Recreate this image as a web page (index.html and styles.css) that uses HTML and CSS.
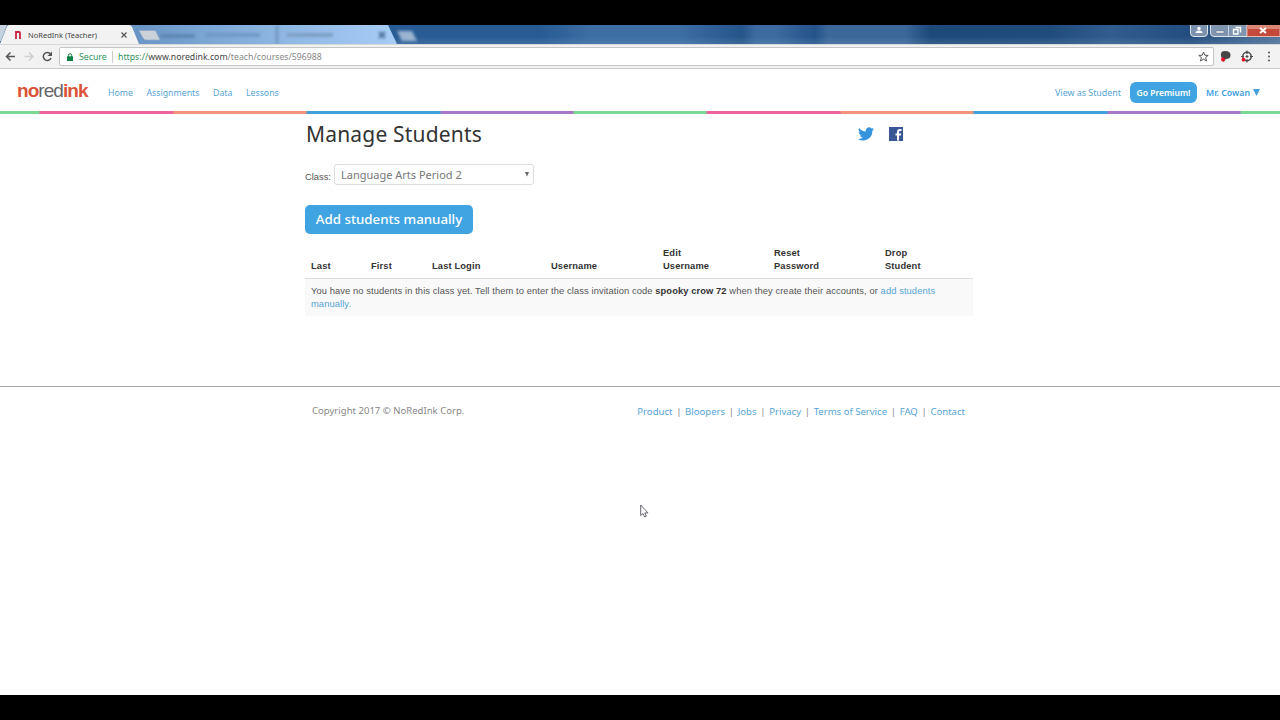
FILE: index.html
```html
<!DOCTYPE html>
<html lang="en">
<head>
    <meta charset="UTF-8">
    <meta name="viewport" content="width=device-width, initial-scale=1.0">
    <title>NoRedInk (Teacher)</title>
    <link rel="stylesheet" href="styles.css">
</head>
<body>
    <div class="window">
        <div class="tab-bar">
            <svg class="tab-shapes" width="430" height="19" viewBox="0 0 430 19">
                <defs>
                    <filter id="soft" x="-10%" y="-30%" width="120%" height="160%"><feGaussianBlur stdDeviation="1.5"/></filter>
                    <linearGradient id="glass" x1="0" x2="1">
                        <stop offset="0" stop-color="#6893c4"/>
                        <stop offset="0.45" stop-color="#87b0dd"/>
                        <stop offset="1" stop-color="#a7cdf6"/>
                    </linearGradient>
                </defs>
                <path d="M130 0H388L397 19H130Z" fill="url(#glass)"/>
                <g filter="url(#soft)">
                    <path d="M160 11h35" stroke="#587fab" stroke-width="3"/>
                    <path d="M205 10h55" stroke="#7199c7" stroke-width="4"/>
                    <path d="M277 0v19" stroke="#6f96c1" stroke-width="3"/>
                    <path d="M287 10h46" stroke="#7e9fc5" stroke-width="4"/>
                    <path d="M379 7l6 6M385 7l-6 6" stroke="#3e678f" stroke-width="2"/>
                    <path d="M397 6h15l5 10h-15z" fill="#9bb5d2"/>
                </g>
                <path d="M139 5.500h15q1 0 2 1l4 8.500h-14q-2 0-3-2z" fill="#cbd1d8" stroke="#8da8c6" stroke-width="0.700"/>
                <path d="M0 19L7 1Q8 0 9 0H129Q131 0 132 2L139 19Z" fill="#f2f2f2"/>
                <path d="M0 0H7L1 16H0Z" fill="#c5d2df"/>
            </svg>
            <div class="active-tab">
                <svg class="favicon" width="6" height="8" viewBox="0 0 6 8"><path d="M1 8V1H4Q5 1 5 2V8" fill="none" stroke="#c9243f" stroke-width="1.800"/></svg>
                <span class="tab-title">NoRedInk (Teacher)</span>
                <svg class="tab-close" width="6" height="6" viewBox="0 0 6 6"><path d="M.5 .5l5 5M5.500 .5l-5 5" stroke="#555" stroke-width="1.200"/></svg>
            </div>
            <svg class="window-controls" width="90" height="14" viewBox="0 0 90 14">
                <path d="M.5 0V8Q.5 11.500 4 11.500H14Q17.500 11.500 17.500 8V0" fill="#7b91ac" stroke="#dce4ee"/>
                <path d="M20.500 0V8Q20.500 11.500 24 11.500H57V0" fill="#8095af" stroke="#dce4ee"/>
                <path d="M38.500 0v11" stroke="#c4d0de"/>
                <path d="M57 0H90V11.500H57Z" fill="#c4493a" stroke="#e6b9b2"/>
                <path d="M58 0H90V4H58Z" fill="#d98675"/>
                <circle cx="9" cy="3.500" r="1.700" fill="#fff"/><path d="M5.500 8q0-2.500 3.500-2.500T12.500 8z" fill="#fff"/>
                <path d="M26 6h8v2h-8z" fill="#fff" stroke="#526580" stroke-width="0.500"/>
                <path d="M45.500 2.500h5v5M43.500 4.500h4.500v4.500h-4.500z" fill="none" stroke="#fff" stroke-width="1.400"/>
                <path d="M70 3l6 5M76 3l-6 5" stroke="#fff" stroke-width="2"/>
            </svg>
        </div>

        <div class="toolbar">
            <svg class="browser-nav" width="60" height="22" viewBox="0 0 60 22" fill="none" stroke-width="1.500">
                <path d="M15 11.500H6.500M10.500 7.500l-4 4 4 4" stroke="#555"/>
                <path d="M24.500 11.500H33M29 7.500l4 4-4 4" stroke="#cfcfcf"/>
                <path d="M50.500 9A4 4 0 1 0 51 13" stroke="#555"/>
                <path d="M52 6.500v4.500h-4.500z" fill="#555"/>
            </svg>
            <div class="address">
                <svg class="lock" width="6" height="8" viewBox="0 0 6 8"><path d="M1.300 4V2.400a1.700 1.700 0 0 1 3.400 0V4" fill="none" stroke="#0b8043"/><path d="M0 3.300h6V8H0z" fill="#0b8043"/></svg>
                <span class="secure">Secure</span>
                <span class="url"><span class="scheme">https://</span><span class="host">www.noredink.com</span>/teach/courses/596988</span>
                <svg class="star" width="11" height="11" viewBox="0 0 11 11"><path d="M5.500 1l1.300 3.200 3.400.2-2.600 2.200.9 3.400-3-1.900-3 1.900.9-3.400L.8 4.400l3.400-.2z" fill="none" stroke="#555"/></svg>
            </div>
            <svg class="extensions" width="66" height="22" viewBox="0 0 66 22">
                <path d="M7 11Q6 6 11 6Q17 6 16.500 11Q16 14 12 14L9 17Z" fill="#474747"/><circle cx="9" cy="14.500" r="2" fill="#f00d24"/>
                <circle cx="33" cy="11.500" r="4.200" fill="none" stroke="#4b4b4b" stroke-width="1.500"/><path d="M33 5.500v3.500M33 14v3.500M27 11.500h3M36 11.500h3M31.500 11.500h3M33 10v3" stroke="#4b4b4b" stroke-width="1.200"/><circle cx="29.500" cy="14.700" r="1.900" fill="#f00d24"/>
                <g fill="#555"><circle cx="55" cy="7.500" r="1"/><circle cx="55" cy="11.500" r="1"/><circle cx="55" cy="15.500" r="1"/></g>
            </svg>
        </div>

        <header class="site-header">
            <div class="logo"><b>no</b>red<b>ink</b></div>
            <nav class="main-nav">
                <a>Home</a>
                <a>Assignments</a>
                <a>Data</a>
                <a>Lessons</a>
            </nav>
            <div class="account">
                <a class="view-student">View as Student</a>
                <a class="premium">Go Premium!</a>
                <a class="user">Mr. Cowan</a>
                <svg width="7" height="7" viewBox="0 0 7 7"><path d="M0 0h7L3.500 7z" fill="#409fdc"/></svg>
            </div>
        </header>
        <div class="rainbow"></div>

        <main class="content">
            <div class="title-row">
                <h1>Manage Students</h1>
                <div class="social">
                    <svg width="16" height="14" viewBox="0 0 24 20"><path d="M24 2.400a10 10 0 0 1-2.800.8A5 5 0 0 0 23.300.5a10 10 0 0 1-3.100 1.200A4.900 4.900 0 0 0 11.800 6.200 14 14 0 0 1 1.700 1a5 5 0 0 0 1.500 6.600A5 5 0 0 1 1 7a5 5 0 0 0 3.900 4.900 5 5 0 0 1-2.200.1 5 5 0 0 0 4.600 3.400A10 10 0 0 1 0 17.500 14 14 0 0 0 21.500 5 10 10 0 0 0 24 2.400z" fill="#3594dd"/></svg>
                    <svg width="14" height="14" viewBox="0 0 14 14"><path d="M0 0h14v14H0z" fill="#3a5795"/><path d="M9 13.500V5Q9 3 11 3h1.500M6.500 7.500H12" fill="none" stroke="#fff" stroke-width="2"/></svg>
                </div>
            </div>
            <div class="class-row">
                <label>Class:</label>
                <div class="class-select"><span>Language Arts Period 2</span><svg width="4" height="5" viewBox="0 0 4 5"><path d="M0 0h4L2 4.500z" fill="#666"/></svg></div>
            </div>
            <button class="add-btn">Add students manually</button>
            <table class="students">
                <thead>
                    <tr>
                        <th class="col-last">Last</th>
                        <th class="col-first">First</th>
                        <th class="col-login">Last Login</th>
                        <th class="col-username">Username</th>
                        <th class="col-edit">Edit<br>Username</th>
                        <th class="col-reset">Reset<br>Password</th>
                        <th>Drop<br>Student</th>
                    </tr>
                </thead>
                <tbody>
                    <tr>
                        <td colspan="7">You have no students in this class yet. Tell them to enter the class invitation code <b>spooky crow 72</b> when they create their accounts, or <a>add students<br>manually.</a></td>
                    </tr>
                </tbody>
            </table>
        </main>

        <footer class="site-footer">
            <div class="footer-inner">
                <span class="copyright">Copyright 2017 © NoRedInk Corp.</span>
                <div class="footer-links">
                    <a>Product</a><i>|</i><a>Bloopers</a><i>|</i><a>Jobs</a><i>|</i><a>Privacy</a><i>|</i><a>Terms of Service</a><i>|</i><a>FAQ</a><i>|</i><a>Contact</a>
                </div>
            </div>
        </footer>
        <svg class="cursor" width="9" height="14" viewBox="0 0 9 14"><path d="M.7 1v10.500l2.300-2 1.700 3.500 1.700-.8-1.600-3.300H8z" fill="#fff" stroke="#55555f" stroke-width="0.900"/></svg>
    </div>
</body>
</html>
```

FILE: styles.css
```css
* {
    box-sizing: border-box;
}

body {
    margin: 0;
    height: 720px;
    padding: 25px 0;
    background: #000;
    overflow: hidden;
    font-family: "Noto Sans", sans-serif;
}

.window {
    height: 670px;
    background: #fff;
    position: relative;
}

svg {
    display: block;
    flex: none;
}

.tab-bar {
    height: 19px;
    display: flex;
    justify-content: space-between;
    position: relative;
    background:
        linear-gradient(180deg, transparent 60%, rgba(130, 160, 200, 0.25)),
        linear-gradient(90deg, #285b94 420px, #285b94 540px, #3c6da3 590px, #3c6da3 680px, #25558a 742px, #3d6a9f 756px, #3d6a9f 775px, #24538a 815px, #3b6799 828px, #3b6799 905px, #1d4979 930px, #204c7c 1050px, #315c8d 1110px, #234d7e 1190px, #547699);
}

.tab-shapes {
    position: absolute;
    left: 0;
    top: 0;
}

.active-tab {
    width: 132px;
    padding-left: 15px;
    display: flex;
    align-items: center;
    position: relative;
}

.tab-title {
    width: 93px;
    margin-left: 7px;
    font: 7.500px "Noto Sans", sans-serif;
    color: #444;
}

.toolbar {
    height: 25px;
    padding: 2px 0;
    display: flex;
    background: #f2f2f2;
    border-top: 1px solid #d8d8d8;
    border-bottom: 1px solid #c9c9c9;
}

.browser-nav {
    margin-right: -1px;
    margin-top: -2px;
}

.address {
    width: 1155px;
    height: 19px;
    padding: 0 4px 0 7px;
    display: flex;
    align-items: center;
    background: #fff;
    border: 1px solid #c4c4c4;
    border-radius: 2px;
    font-size: 8.750px;
    color: #888;
}

.secure {
    width: 34px;
    margin-left: 6px;
    color: #2f955d;
    border-right: 1px solid #ccc;
    line-height: 12px;
}

.url {
    margin-left: 5px;
}

.scheme {
    color: #2f955d;
}

.host {
    color: #444;
}

.star {
    margin-left: auto;
}

.extensions {
    margin-top: -2px;
}

.site-header {
    height: 42px;
    padding: 5px 20px 0 17px;
    display: flex;
    align-items: center;
    font-size: 8.750px;
    color: #56a4d5;
}

.logo {
    width: 91px;
    height: 24px;
    margin-top: -4px;
    font: 19px/24px "Liberation Sans", sans-serif;
    letter-spacing: -0.950px;
    color: #666;
    white-space: nowrap;
}

.logo b {
    color: #da5338;
}

.main-nav {
    display: flex;
    gap: 13.600px;
}

.account {
    display: flex;
    align-items: center;
    margin-left: auto;
}

.view-student {
    font-size: 8.900px;
}

.premium {
    width: 67px;
    height: 21px;
    margin: 0 9px;
    border-radius: 6px;
    background: #40a4e2;
    color: #fff;
    font-size: 8.500px;
    font-weight: 600;
    line-height: 21px;
    text-align: center;
}

.user {
    margin-right: 3px;
    font-weight: 600;
    color: #409fdc;
}

.rainbow {
    height: 3px;
    background: linear-gradient(90deg, #7bda91 133.400px, #ed649c 133.400px 266.800px, #f2937b 266.800px 400.200px, #429fdb 400.200px 533.600px, #a779c4 533.600px);
    background-position: -93.500px 0;
    background-size: 667px 3px;
}

.content {
    width: 668px;
    height: 272px;
    margin-left: 305px;
}

.title-row {
    height: 40px;
    display: flex;
    justify-content: space-between;
}

h1 {
    margin: 0 0 0 1px;
    font-size: 21px;
    font-weight: 400;
    letter-spacing: 0.180px;
    line-height: 40px;
    color: #333;
}

.social {
    display: flex;
    align-items: center;
    gap: 15px;
    margin-right: 70px;
}

.class-row {
    height: 21px;
    margin-top: 10px;
    display: flex;
}

.class-row label {
    width: 29px;
    padding-top: 7px;
    font: 9.330px/13px "Liberation Sans", sans-serif;
    color: #555;
}

.class-select {
    width: 200px;
    height: 21px;
    padding: 0 4px 1px 6px;
    display: flex;
    align-items: center;
    justify-content: space-between;
    border: 1px solid #ddd;
    border-radius: 3px;
    font-size: 11px;
    color: #777;
}

.add-btn {
    display: block;
    width: 168px;
    height: 29px;
    margin: 20px 0 11px;
    padding: 0 0 2px;
    border: none;
    border-radius: 5px;
    background: #40a4e2;
    color: #fff;
    font: 500 13.300px/26px "Noto Sans", sans-serif;
}

.students {
    width: 668px;
    border-collapse: collapse;
    table-layout: fixed;
    font: 9.330px/13.330px "Liberation Sans", sans-serif;
    color: #555;
}

.students th {
    height: 33px;
    padding: 0 0 4px 6px;
    vertical-align: bottom;
    text-align: left;
    letter-spacing: 0.130px;
    color: #333;
    border-bottom: 1px solid #ddd;
}

.col-last {
    width: 60px;
}

.col-first {
    width: 61px;
}

.col-login {
    width: 119px;
}

.col-username {
    width: 112px;
}

.col-edit {
    width: 111px;
}

.col-reset {
    width: 111px;
}

.students td {
    height: 38px;
    padding: 2px 0 0 6px;
    background: #f9f9f9;
    letter-spacing: 0.097px;
    line-height: 13px;
    white-space: nowrap;
}

.students td b {
    color: #333;
}

.students a {
    color: #56a4d5;
}

.site-footer {
    border-top: 1px solid #aaa;
}

.footer-inner {
    width: 653px;
    margin-left: 312px;
    padding-top: 17px;
    display: flex;
    justify-content: space-between;
    font-size: 9.550px;
    line-height: 14px;
    color: #888;
}

.footer-links {
    display: flex;
    gap: 3.700px;
    padding-top: 1px;
}

.footer-links a {
    color: #56a4d5;
}

.footer-links i {
    font-style: normal;
}

.cursor {
    position: absolute;
    left: 640px;
    top: 479px;
}
```
